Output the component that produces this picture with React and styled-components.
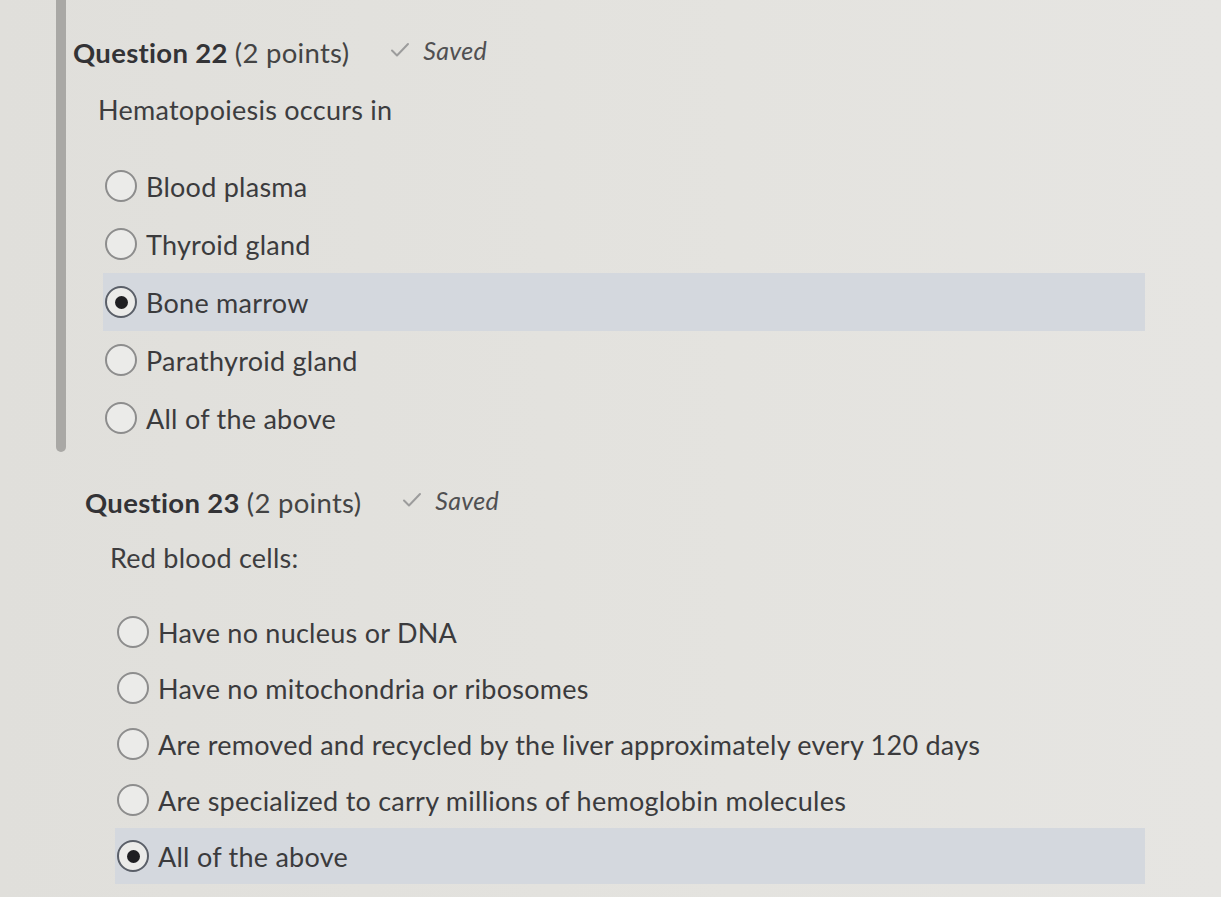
import React from "react";
import styled, { createGlobalStyle } from "styled-components";

const GlobalStyle = createGlobalStyle`
  html, body {
    margin: 0;
    padding: 0;
    background: #e2e1dd;
  }
  body {
    font-family: Lato, "Open Sans", sans-serif;
    color: #3a3a3a;
  }
`;

const Page = styled.div`
  display: flex;
  min-height: 897px;
  background: linear-gradient(90deg, #e0dfdb 0%, #e4e3df 60%, #e6e5e2 100%);
  overflow: hidden;
`;

const Gutter = styled.div`
  width: 56px;
  flex-shrink: 0;
`;

const Scrollbar = styled.div`
  width: 10px;
  height: 452px;
  flex-shrink: 0;
  background: #a9a8a5;
  border-radius: 0 0 5px 5px;
`;

const Content = styled.div`
  flex: 1;
  padding: 34px 76px 0 0;
`;

const Section = styled.section`
  padding-left: ${(p) => p.indent}px;
  margin-top: ${(p) => p.top}px;
`;

const Header = styled.div`
  display: flex;
  align-items: center;
  height: 36px;
  font-size: 27.5px;
  letter-spacing: 0.3px;
  color: #333336;
`;

const Title = styled.span`
  font-weight: 700;
`;

const Points = styled.span`
  font-weight: 400;
  color: #444;
  margin-left: 7px;
`;

const SavedTag = styled.span`
  display: flex;
  align-items: center;
  margin-left: 41px;
  margin-top: -4px;
  font-size: 25px;
  font-style: italic;
  color: #505052;
  gap: 13px;
`;

const Prompt = styled.p`
  margin: ${(p) => p.gap}px 0 0 25px;
  height: 36px;
  line-height: 36px;
  font-size: 27px;
  letter-spacing: 0.25px;
  color: #3d3d3f;
`;

const Options = styled.div`
  margin-top: ${(p) => p.gap}px;
  margin-left: 30px;
  display: flex;
  flex-direction: column;
`;

const Row = styled.label`
  display: flex;
  align-items: center;
  gap: 9px;
  height: ${(p) => p.h}px;
  padding-left: 2px;
  font-size: 27px;
  letter-spacing: 0.25px;
  color: #3b3b3d;
  background: ${(p) => (p.selected ? "#d4d8de" : "transparent")};
`;

const Radio = styled.span`
  width: 32px;
  height: 32px;
  border-radius: 50%;
  flex-shrink: 0;
  box-sizing: border-box;
  border: 2px solid ${(p) => (p.selected ? "#5a5f68" : "#8d8d8d")};
  background: #ebebe9;
  display: flex;
  align-items: center;
  justify-content: center;
  &::after {
    content: "";
    width: 13px;
    height: 13px;
    border-radius: 50%;
    background: #1f1f22;
    display: ${(p) => (p.selected ? "block" : "none")};
  }
`;

function Check() {
  return (
    <svg width="20" height="16" viewBox="0 0 20 16">
      <path d="M2 8.5 L7 13.5 L18 2" fill="none" stroke="#9c9c9c" strokeWidth="2" strokeLinecap="round" strokeLinejoin="round" />
    </svg>
  );
}

function Question({ number, prompt, options, selected, indent, top, rowH, promptGap, optGap }) {
  return (
    <Section indent={indent} top={top}>
      <Header>
        <Title>Question {number}</Title>
        <Points>(2 points)</Points>
        <SavedTag>
          <Check />
          Saved
        </SavedTag>
      </Header>
      <Prompt gap={promptGap}>{prompt}</Prompt>
      <Options gap={optGap}>
        {options.map((o, i) => (
          <Row key={o} h={rowH} selected={i === selected}>
            <Radio selected={i === selected} />
            {o}
          </Row>
        ))}
      </Options>
    </Section>
  );
}

export default function App() {
  return (
    <>
      <GlobalStyle />
      <Page>
        <Gutter />
        <Scrollbar />
        <Content>
          <Question
            number={22}
            prompt="Hematopoiesis occurs in"
            options={["Blood plasma", "Thyroid gland", "Bone marrow", "Parathyroid gland", "All of the above"]}
            selected={2}
            indent={7}
            top={0}
            rowH={58}
            promptGap={22}
            optGap={29}
          />
          <Question
            number={23}
            prompt="Red blood cells:"
            options={[
              "Have no nucleus or DNA",
              "Have no mitochondria or ribosomes",
              "Are removed and recycled by the liver approximately every 120 days",
              "Are specialized to carry millions of hemoglobin molecules",
              "All of the above",
            ]}
            selected={4}
            indent={19}
            top={37}
            rowH={56}
            promptGap={20}
            optGap={28}
          />
        </Content>
      </Page>
    </>
  );
}
